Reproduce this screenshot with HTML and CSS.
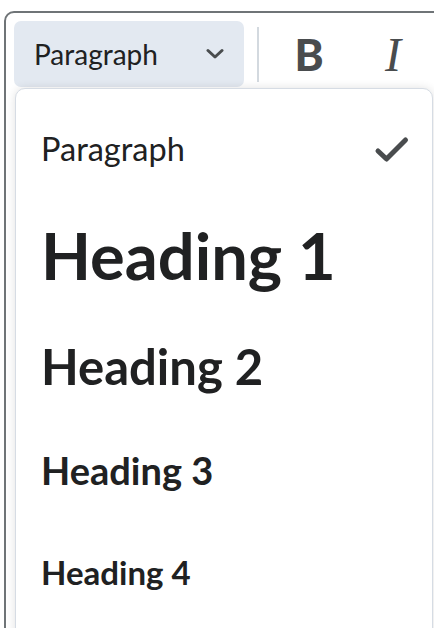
FILE: index.html
```html
<!DOCTYPE html>
<html>
<head>
<meta charset="utf-8">
<link rel="stylesheet" href="styles.css">
</head>
<body>
<div class="editor">
  <div class="toolbar">
    <button class="format-btn">
      <span class="format-label">Paragraph</span>
      <svg class="chevron" width="18" height="12" viewBox="0 0 18 12"><path d="M2 2.5 L9 9 L16 2.5" fill="none" stroke="#494c4e" stroke-width="3" stroke-linecap="round" stroke-linejoin="round"/></svg>
    </button>
    <span class="sep"></span>
    <span class="tool bold">B</span>
    <span class="tool italic">I</span>
  </div>
  <div class="menu">
    <div class="item para"><span>Paragraph</span>
      <svg class="check" width="36" height="30" viewBox="0 0 36 30"><path d="M4 16 L12.5 24 L31.5 5" fill="none" stroke="#494c4e" stroke-width="5" stroke-linecap="round" stroke-linejoin="round"/></svg>
    </div>
    <div class="item h1">Heading 1</div>
    <div class="item h2">Heading 2</div>
    <div class="item h3">Heading 3</div>
    <div class="item h4">Heading 4</div>
  </div>
</div>
</body>
</html>
```

FILE: styles.css
```css
html, body {
  margin: 0;
  padding: 0;
  overflow: hidden;
  background: #ffffff;
  width: 434px;
  height: 628px;
}
body {
  font-family: Lato, "Liberation Sans", sans-serif;
  color: #202122;
}
.editor {
  position: relative;
  margin: 11px 0 0 4px;
  width: 520px;
  height: 700px;
  border: 2px solid #6f7477;
  border-radius: 10px;
  box-sizing: border-box;
}
.toolbar {
  display: flex;
  align-items: center;
  padding: 8px 0 0 8px;
  height: 66px;
}
.format-btn {
  display: flex;
  align-items: center;
  justify-content: space-between;
  width: 230px;
  height: 66px;
  padding: 0 20px 0 20px;
  box-sizing: border-box;
  background: #e3e9f1;
  border: none;
  border-radius: 7px;
  font-family: Lato, sans-serif;
  font-size: 28px;
  color: #202122;
}
.sep {
  width: 2px;
  height: 55px;
  background: #d3d9df;
  margin-left: 13px;
}
.tool {
  color: #494c4e;
  text-align: center;
}
.bold {
  font-family: Lato, sans-serif;
  font-weight: 900;
  font-size: 44px;
  width: 30px;
  margin-left: 35px;
}
.italic {
  font-family: "Liberation Serif", serif;
  font-style: italic;
  font-size: 48px;
  width: 30px;
  margin-left: 54px;
}
.menu {
  position: absolute;
  left: 9px;
  top: 75px;
  width: 418px;
  height: 600px;
  background: #fff;
  border: 1px solid #d6dce4;
  border-radius: 10px;
  box-shadow: 0 0 10px rgba(0, 0, 0, 0.12);
  padding-left: 25px;
  box-sizing: border-box;
}
.item {
  display: flex;
  align-items: center;
  justify-content: space-between;
  line-height: 1;
  font-weight: 700;
}
.para {
  font-weight: 400;
  font-size: 32.5px;
  padding-top: 44px;
  padding-right: 22px;
  height: 32px;
}
.check {
  margin-top: 2px;
}
.h1 { font-size: 65px; margin-top: 58px; }
.h2 { font-size: 49px; margin-top: 54px; }
.h3 { font-size: 38px; margin-top: 60px; }
.h4 { font-size: 33px; margin-top: 67px; }
```
